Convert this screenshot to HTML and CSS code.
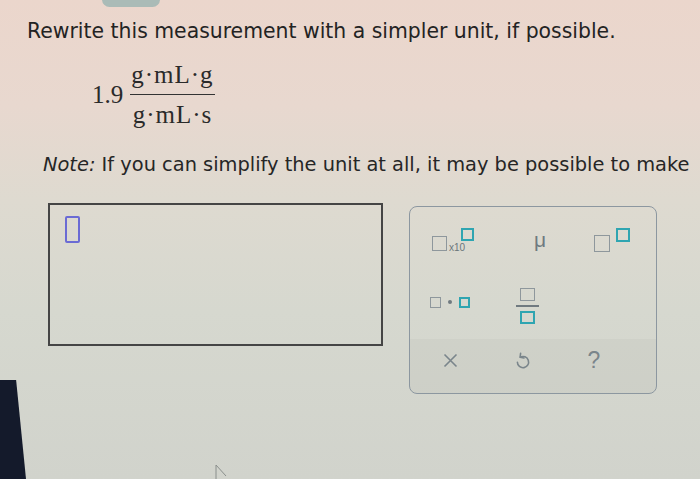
FILE: index.html
```html
<!DOCTYPE html>
<html>
<head>
<meta charset="utf-8">
<link rel="stylesheet" href="styles.css">
</head>
<body>
<div class="screen">
  <div class="tab"></div>
  <h1 class="title">Rewrite this measurement with a simpler unit, if possible.</h1>
  <div class="expr">
    <span class="num">1.9</span>
    <span class="frac">
      <span class="top">g·mL·g</span>
      <span class="bot">g·mL·s</span>
    </span>
  </div>
  <p class="note"><i>Note:</i> If you can simplify the unit at all, it may be possible to make</p>
  <div class="work">
    <div class="answer"><span class="cursor"></span></div>
    <div class="pad">
      <div class="keys">
        <div class="key k-sci"><span class="sci"><span class="sq g k1"></span><span class="x10">x10</span><span class="sq t k1t"></span></span></div>
        <div class="key shift mu">μ</div>
        <div class="key shift"><span class="sci"><span class="sq g k3"></span><span class="sq t k3t"></span></span></div>
        <div class="key"><span class="sq g sm"></span><span class="dot"></span><span class="sq t sm"></span></div>
        <div class="key fr"><span class="sq g fsq"></span><span class="bar"></span><span class="sq t fsq"></span></div>
        <div class="key"></div>
      </div>
      <div class="actions">
        <div class="act">
          <svg width="15" height="15" viewBox="0 0 15 15"><path d="M1.5 1.5L13.5 13.5M13.5 1.5L1.5 13.5" stroke="#7a858b" stroke-width="1.6" fill="none"/></svg>
        </div>
        <div class="act">
          <svg width="17" height="19" viewBox="0 0 17 19"><path d="M6.3 6.2A5.6 5.6 0 1 1 3.4 11.2" stroke="#7a858b" stroke-width="1.6" fill="none" stroke-linecap="round"/><path d="M6.6 2.4L6.1 6.3L9.9 7" stroke="#7a858b" stroke-width="1.6" fill="none" stroke-linejoin="round" stroke-linecap="round"/></svg>
        </div>
        <div class="act q">?</div>
      </div>
    </div>
  </div>
  <div class="bezel"></div>
  <svg class="pointer" width="14" height="16" viewBox="0 0 14 16"><path d="M1 1L1 16M1 1L11 12" stroke="#8a8f8c" stroke-width="1" fill="none"/></svg>
</div>
</body>
</html>
```
FILE: styles.css
```css
html, body {
  margin: 0;
  padding: 0;
}
body {
  width: 700px;
  height: 479px;
  overflow: hidden;
  font-family: "DejaVu Sans", Verdana, sans-serif;
  color: #262626;
}
.screen {
  position: relative;
  width: 700px;
  height: 479px;
  box-sizing: border-box;
  padding: 16px 0 0 27px;
  background: linear-gradient(180deg, #ebd6cc 0%, #e8d8cf 22%, #dedad0 42%, #d6d8cf 65%, #d1d3cc 100%);
  overflow: hidden;
}
.tab {
  position: absolute;
  left: 102px;
  top: -8px;
  width: 58px;
  height: 15px;
  border-radius: 8px;
  background: #aabbb7;
}
.title {
  margin: 0;
  font-size: 20.4px;
  font-weight: normal;
  line-height: 30px;
  white-space: nowrap;
  color: #232323;
}
.expr {
  display: flex;
  align-items: center;
  margin: 15px 0 0 65px;
  font-family: "Liberation Serif", "Times New Roman", serif;
  font-size: 25px;
  line-height: 28px;
  color: #2a2a2a;
}
.num {
  margin-right: 7px;
}
.frac {
  display: flex;
  flex-direction: column;
  align-items: center;
}
.top {
  padding: 0 1px 5px;
  border-bottom: 1.5px solid #333;
  letter-spacing: 1px;
}
.bot {
  padding-top: 6px;
  letter-spacing: 1px;
}
.note {
  margin: 23px 0 0 16px;
  font-size: 19.4px;
  white-space: nowrap;
  line-height: 26px;
  color: #262626;
}
.note i {
  font-style: italic;
}
.work {
  display: flex;
  align-items: flex-start;
  margin: 25px 0 0 21px;
}
.answer {
  width: 335px;
  height: 143px;
  flex: none;
  border: 2px solid #454545;
  box-sizing: border-box;
  padding: 11px 0 0 15px;
}
.cursor {
  display: block;
  width: 15px;
  height: 27px;
  border: 2px solid #6b6bd4;
  border-radius: 2px;
  box-sizing: border-box;
}
.pad {
  margin: 3px 0 0 26px;
  width: 248px;
  height: 188px;
  flex: none;
  border: 1.5px solid #8c97a0;
  border-radius: 8px;
  box-sizing: border-box;
  display: flex;
  flex-direction: column;
  overflow: hidden;
}
.keys {
  display: grid;
  grid-template-columns: repeat(3, 72px);
  grid-template-rows: 50px 74px;
  padding: 8px 0 0 4px;
}
.key {
  display: flex;
  align-items: center;
  justify-content: center;
}
.key.k-sci {
  padding-left: 6px;
}
.key.shift {
  padding-left: 36px;
}
.sci {
  display: flex;
  align-items: flex-start;
  height: 24px;
}
.sq {
  display: block;
  box-sizing: border-box;
  border: 1.5px solid #8e979c;
  flex: none;
}
.sq.t {
  border: 2px solid #2fa5b1;
}
.k1 {
  width: 15px;
  height: 15px;
  margin-top: 8px;
}
.x10 {
  font-family: "Liberation Sans", Arial, sans-serif;
  font-size: 10px;
  line-height: 10px;
  color: #6b757a;
  margin: 15px 0 0 2px;
}
.k1t {
  width: 13px;
  height: 13px;
  margin-left: -4px;
}
.k3 {
  width: 16px;
  height: 17px;
  margin-top: 7px;
}
.k3t {
  width: 14px;
  height: 14px;
  margin-left: 6px;
}
.mu {
  font-family: "Liberation Sans", Arial, sans-serif;
  font-size: 21px;
  color: #6f7a80;
}
.sq.sm {
  width: 11px;
  height: 11px;
}
.dot {
  width: 4px;
  height: 4px;
  border-radius: 50%;
  background: #707a80;
  margin: 0 7px;
}
.fr {
  flex-direction: column;
  padding-left: 10px;
  padding-top: 8px;
}
.fsq {
  width: 15px;
  height: 13px;
}
.bar {
  width: 23px;
  height: 1.5px;
  background: #707a80;
  margin: 4px 0;
}
.actions {
  flex: 1;
  display: grid;
  grid-template-columns: repeat(3, 72px);
  align-items: center;
  padding: 0 0 12px 4px;
  background: rgba(90, 100, 100, 0.05);
}
.act {
  display: flex;
  justify-content: center;
  align-items: center;
}
.q {
  font-size: 23px;
  line-height: 24px;
  color: #7a858b;
  font-family: "Liberation Sans", Arial, sans-serif;
}
.bezel {
  position: absolute;
  left: 0;
  top: 380px;
  width: 26px;
  height: 99px;
  background: #141a2b;
  clip-path: polygon(0 0, 62% 0, 100% 100%, 0 100%);
}
.pointer {
  position: absolute;
  left: 215px;
  top: 464px;
}
```
